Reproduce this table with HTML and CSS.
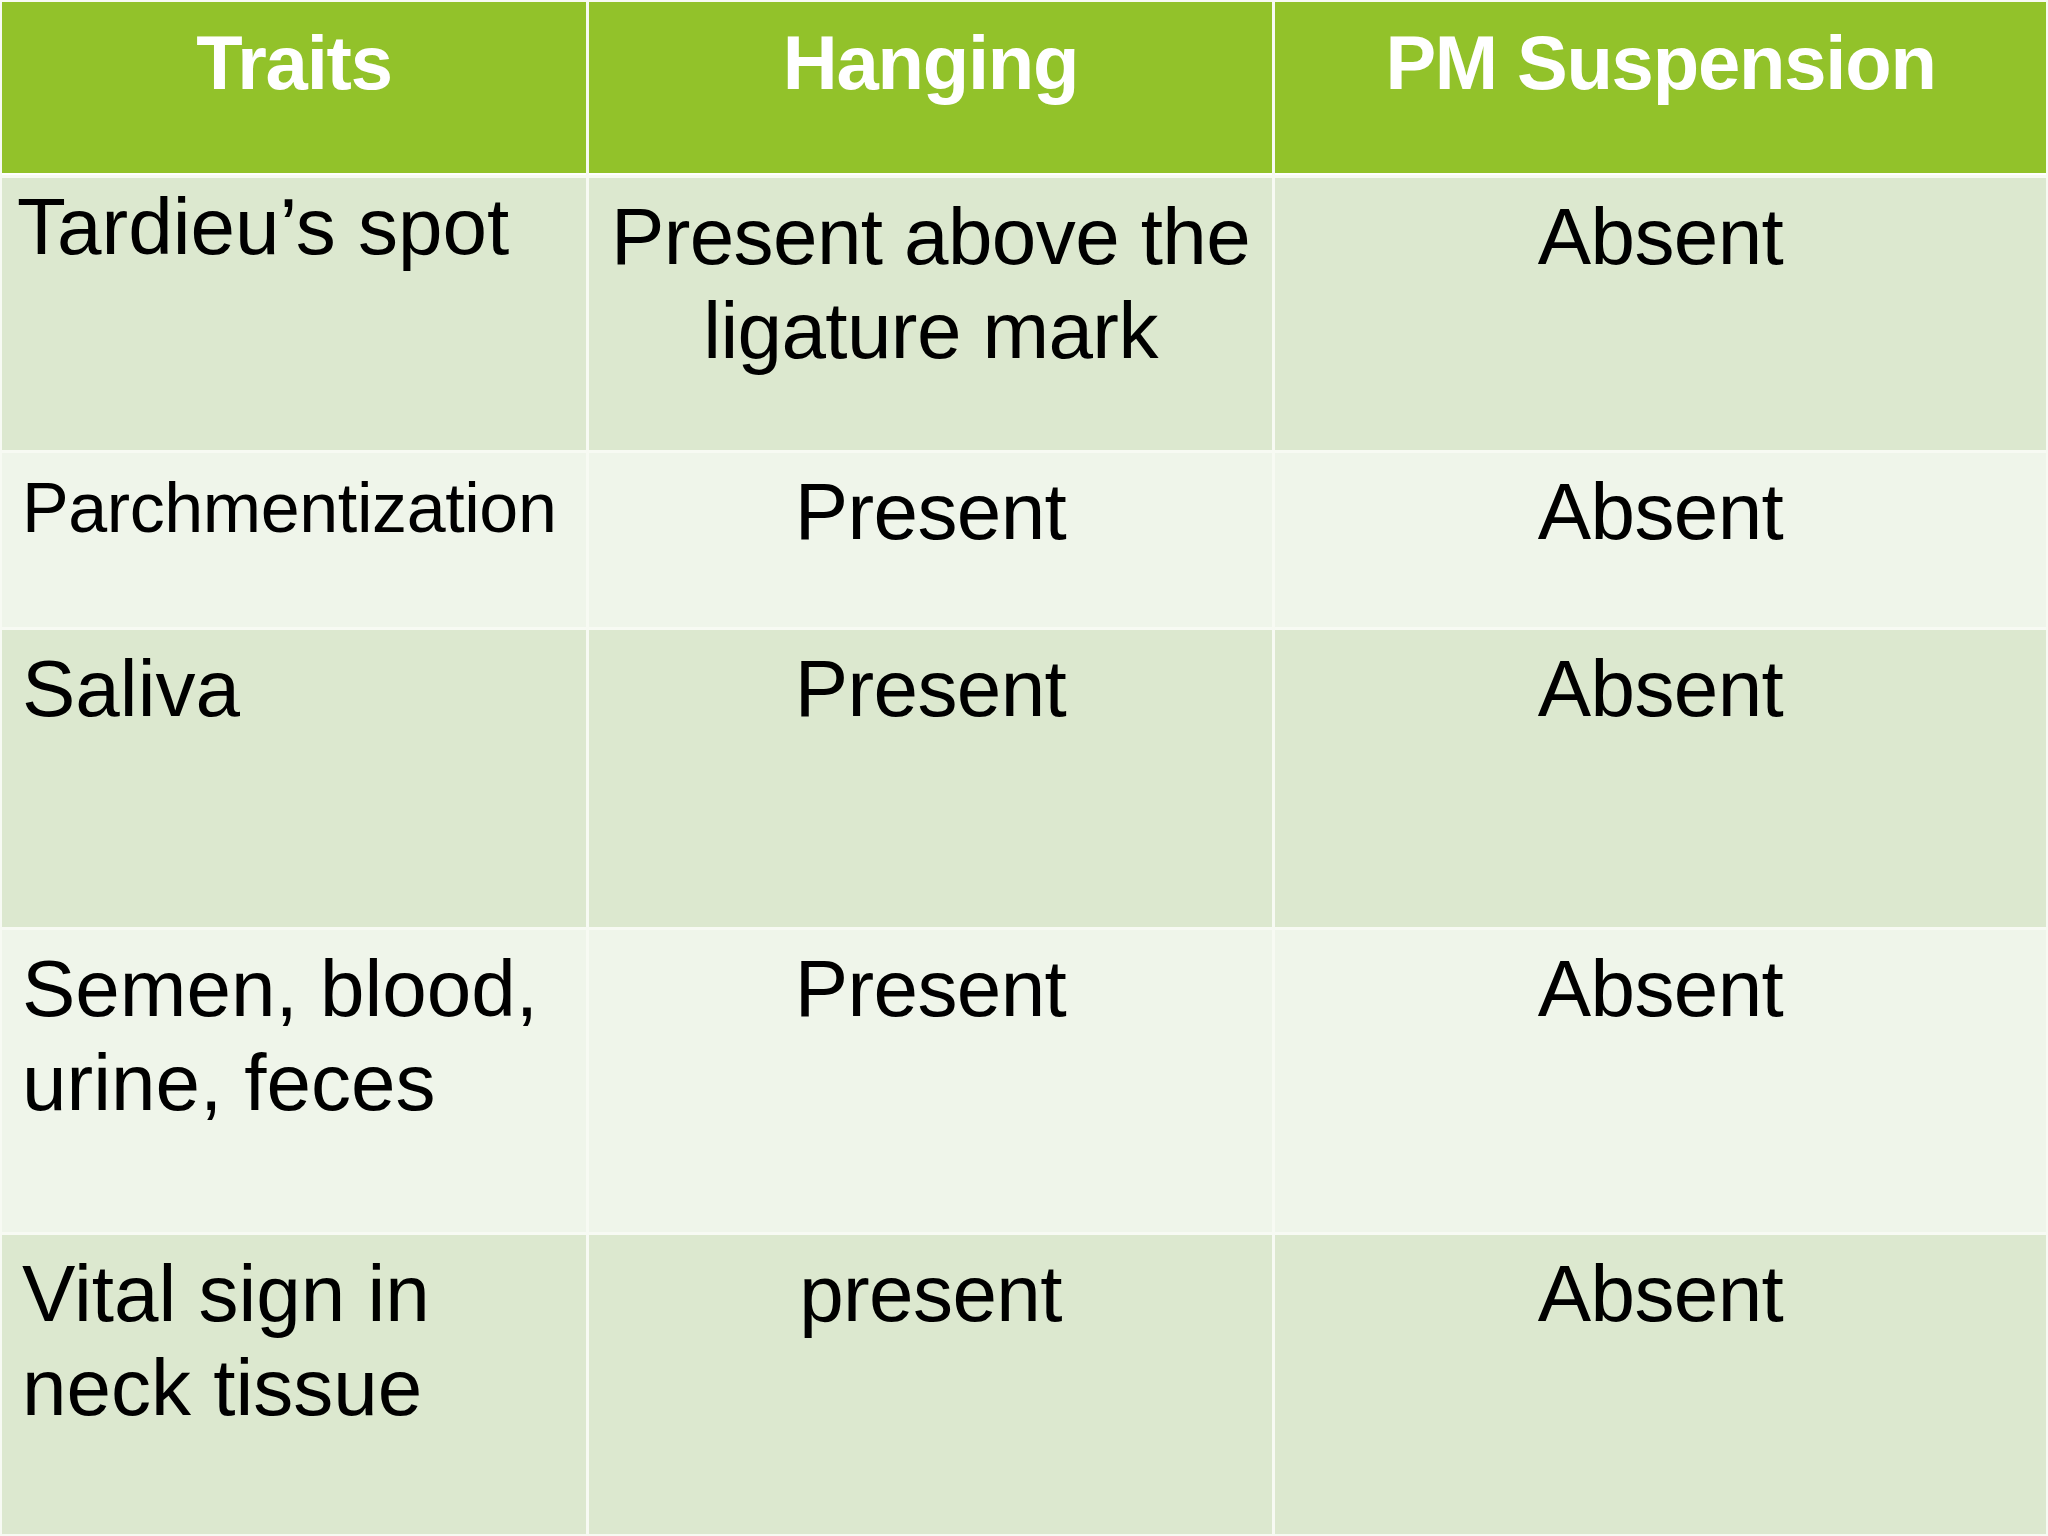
FILE: index.html
```html
<!DOCTYPE html>
<html lang="en">
<head>
<meta charset="utf-8">
<title>Hanging vs PM Suspension</title>
<link rel="stylesheet" href="styles.css">
</head>
<body>
<div class="table">
  <div class="cell head">Traits</div>
  <div class="cell head">Hanging</div>
  <div class="cell head">PM Suspension</div>

  <div class="cell dark trait tight">Tardieu’s spot</div>
  <div class="cell dark center">Present above the ligature mark</div>
  <div class="cell dark center">Absent</div>

  <div class="cell light trait small">Parchmentization</div>
  <div class="cell light center">Present</div>
  <div class="cell light center">Absent</div>

  <div class="cell dark trait">Saliva</div>
  <div class="cell dark center">Present</div>
  <div class="cell dark center">Absent</div>

  <div class="cell light trait">Semen, blood, urine, feces</div>
  <div class="cell light center">Present</div>
  <div class="cell light center">Absent</div>

  <div class="cell dark trait">Vital sign in neck tissue</div>
  <div class="cell dark center">present</div>
  <div class="cell dark center">Absent</div>
</div>
</body>
</html>
```

FILE: styles.css
```css
* { box-sizing: border-box; }

html, body {
  margin: 0;
  padding: 0;
  width: 2048px;
  height: 1536px;
  background: #ffffff;
  overflow: hidden;
}

.table {
  display: grid;
  grid-template-columns: 584px 683px 1fr;
  grid-template-rows: 173px 272px 174px 297px 302px 299px;
  column-gap: 3px;
  row-gap: 3px;
  padding: 2px;
  width: 2048px;
  height: 1536px;
  background: #f7faf3;
  font-family: "Liberation Sans", Arial, sans-serif;
}

.cell {
  color: #000000;
  font-size: 80px;
  line-height: 94px;
  letter-spacing: 0;
  padding: 12px 16px 0 16px;
}

.head {
  background: #92c22a;
  color: #ffffff;
  font-weight: bold;
  font-size: 76px;
  line-height: 87px;
  letter-spacing: -1.2px;
  text-align: center;
  padding-top: 17px;
  border-bottom: 2px solid #ffffff;
}

.dark { background: #dce8cf; }
.light { background: #eff5ea; }

.center { text-align: center; letter-spacing: -0.6px; }

.trait { padding-left: 20px; padding-right: 8px; }
.tight { padding-top: 2px; padding-left: 15px; }
.small { font-size: 70px; padding-top: 8px; letter-spacing: -0.4px; }
```
